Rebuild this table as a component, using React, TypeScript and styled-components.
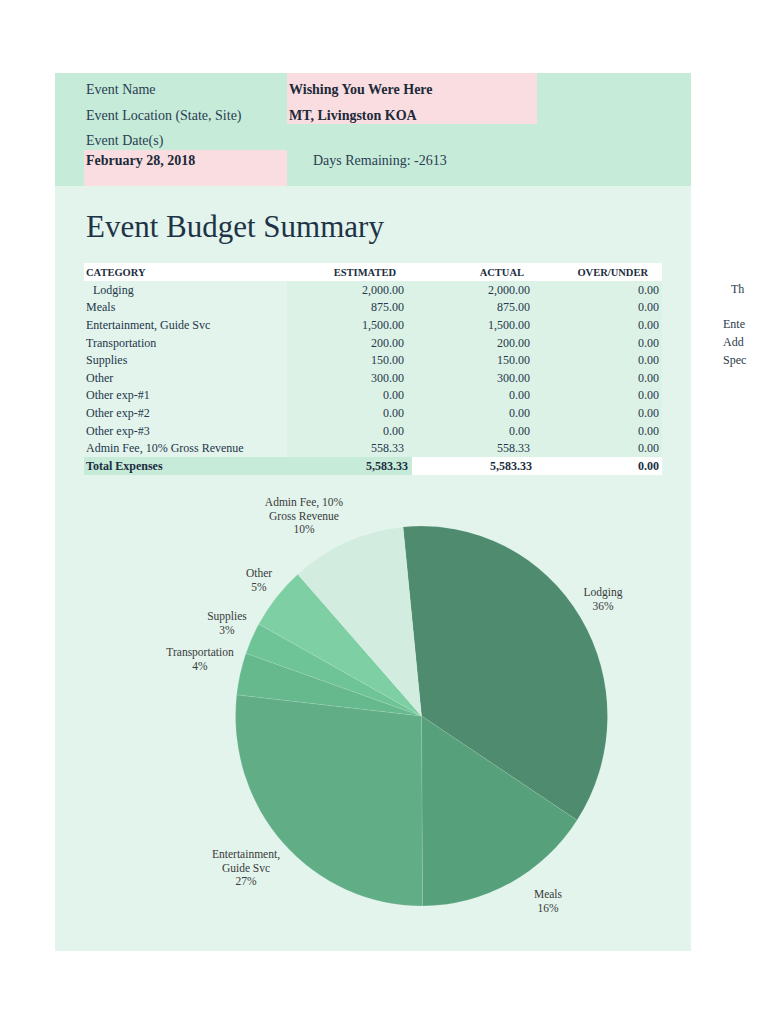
import React from "react";
import styled, { createGlobalStyle } from "styled-components";

const GlobalStyle = createGlobalStyle`
  html, body {
    margin: 0;
    padding: 0;
    background: #ffffff;
    overflow-x: hidden;
  }
  body {
    font-family: "Liberation Serif", "DejaVu Serif", serif;
    color: #22344a;
  }
`;

const Page = styled.div`
  padding: 73px 0 73px 55px;
`;

const Panel = styled.div`
  width: 636px;
  background: #e2f4ec;
`;

const InfoGrid = styled.div`
  display: grid;
  grid-template-columns: 29px 203px 250px 154px;
  grid-template-rows: 28px 23px 26px 36px;
  background: #c6ebd9;
`;

const InfoCell = styled.div<{ $col: number; $row: string; $bold?: boolean; $pink?: boolean; $top?: boolean; $pb?: number; $pl?: number }>`
  grid-column: ${(p) => p.$col};
  grid-row: ${(p) => p.$row};
  display: flex;
  flex-direction: column;
  justify-content: ${(p) => (p.$top ? "flex-start" : "flex-end")};
  padding: ${(p) => (p.$top ? "3px" : "0")} 0 ${(p) => p.$pb ?? 0}px ${(p) => p.$pl ?? 2}px;
  background: ${(p) => (p.$pink ? "#f9dde0" : "transparent")};
  font-size: 14px;
  line-height: 16px;
  font-weight: ${(p) => (p.$bold ? 700 : 400)};
  color: ${(p) => (p.$bold ? "#1c2a3a" : "#2a3d52")};
  white-space: nowrap;
`;

const PinkStack = styled.div`
  grid-column: 3;
  grid-row: 1 / 3;
  background: #f9dde0;
  display: grid;
  grid-template-rows: 28px 23px;
`;

const StackLine = styled.div<{ $pb: number }>`
  display: flex;
  align-items: flex-end;
  padding: 0 0 ${(p) => p.$pb}px 2px;
  font-size: 14px;
  line-height: 16px;
  font-weight: 700;
  color: #1c2a3a;
  white-space: nowrap;
`;

const Summary = styled.section`
  padding: 23px 0 0 29px;
`;

const Title = styled.h1`
  margin: 0 0 18px 2px;
  font-size: 31px;
  line-height: 36px;
  font-weight: 400;
  color: #1f3346;
`;

const Table = styled.div`
  display: flex;
  flex-direction: column;
`;

const Row = styled.div<{ $h: number }>`
  display: grid;
  grid-template-columns: 203px 125px 126px 124px 100px;
  height: ${(p) => p.$h}px;
`;

const Cell = styled.div<{ $right?: boolean; $bg?: string; $bold?: boolean; $pr?: number; $pl?: number; $size?: number }>`
  display: flex;
  align-items: center;
  justify-content: ${(p) => (p.$right ? "flex-end" : "flex-start")};
  padding: 1px ${(p) => p.$pr ?? 0}px 0 ${(p) => p.$pl ?? 2}px;
  background: ${(p) => p.$bg ?? "transparent"};
  font-size: ${(p) => p.$size ?? 12}px;
  font-weight: ${(p) => (p.$bold ? 700 : 400)};
  color: ${(p) => (p.$bold ? "#1c2d40" : "#24364a")};
  white-space: nowrap;
  overflow: hidden;
`;

const Note = styled.div<{ $indent?: number }>`
  display: flex;
  align-items: center;
  padding-left: ${(p) => 61 + (p.$indent ?? 0)}px;
  font-size: 12px;
  color: #2a3a4a;
  white-space: nowrap;
`;

const ChartArea = styled.div`
  height: 476px;
`;

const ChartSvg = styled.svg`
  display: block;
  overflow: visible;
`;

const LabelText = styled.text`
  font-family: "Liberation Serif", "DejaVu Serif", serif;
  font-size: 11.5px;
  fill: #3a3a3a;
`;

type Item = { name: string; est: string; act: string; indent?: boolean; note?: string; noteIndent?: number };

const items: Item[] = [
  { name: "Lodging", est: "2,000.00", act: "2,000.00", indent: true, note: "Th", noteIndent: 8 },
  { name: "Meals", est: "875.00", act: "875.00" },
  { name: "Entertainment, Guide Svc", est: "1,500.00", act: "1,500.00", note: "Ente" },
  { name: "Transportation", est: "200.00", act: "200.00", note: "Add" },
  { name: "Supplies", est: "150.00", act: "150.00", note: "Spec" },
  { name: "Other", est: "300.00", act: "300.00" },
  { name: "Other exp-#1", est: "0.00", act: "0.00" },
  { name: "Other exp-#2", est: "0.00", act: "0.00" },
  { name: "Other exp-#3", est: "0.00", act: "0.00" },
  { name: "Admin Fee, 10% Gross Revenue", est: "558.33", act: "558.33" },
];

const NUM_BG = "#ddf2e7";

type Slice = { value: number; color: string; label: string[]; lx: number; ly: number };

const slices: Slice[] = [
  { value: 2000, color: "#4f8c6f", label: ["Lodging", "36%"], lx: 548, ly: 117 },
  { value: 875, color: "#56a07b", label: ["Meals", "16%"], lx: 493, ly: 419 },
  { value: 1500, color: "#61ae86", label: ["Entertainment,", "Guide Svc", "27%"], lx: 191, ly: 379 },
  { value: 200, color: "#65b98d", label: ["Transportation", "4%"], lx: 145, ly: 177 },
  { value: 150, color: "#6ec497", label: ["Supplies", "3%"], lx: 172, ly: 141 },
  { value: 300, color: "#7ecfa3", label: ["Other", "5%"], lx: 204, ly: 98 },
  { value: 558.33, color: "#d2ede0", label: ["Admin Fee, 10%", "Gross Revenue", "10%"], lx: 249, ly: 27 },
];

const CX = 366.5;
const CY = 241;
const RX = 186;
const RY = 190;
const START = -5.7;

function pt(deg: number): [number, number] {
  const a = (deg * Math.PI) / 180;
  return [CX + RX * Math.sin(a), CY - RY * Math.cos(a)];
}

function PieChart() {
  const total = slices.reduce((s, x) => s + x.value, 0);
  let acc = START;
  const paths = slices.map((s, i) => {
    const sweep = (s.value / total) * 360;
    const a0 = acc;
    const a1 = acc + sweep;
    acc = a1;
    const [x0, y0] = pt(a0);
    const [x1, y1] = pt(a1);
    const large = sweep > 180 ? 1 : 0;
    const d = `M ${CX} ${CY} L ${x0.toFixed(2)} ${y0.toFixed(2)} A ${RX} ${RY} 0 ${large} 1 ${x1.toFixed(2)} ${y1.toFixed(2)} Z`;
    return <path key={i} d={d} fill={s.color} stroke="rgba(255,255,255,0.18)" strokeWidth={0.6} />;
  });
  return (
    <ChartSvg width={636} height={476} viewBox="0 0 636 476">
      {paths}
      {slices.map((s, i) => (
        <LabelText key={i} textAnchor="middle">
          {s.label.map((line, j) => (
            <tspan key={j} x={s.lx} y={s.ly + 4 + j * 13.5}>
              {line}
            </tspan>
          ))}
        </LabelText>
      ))}
    </ChartSvg>
  );
}

export default function App() {
  return (
    <>
      <GlobalStyle />
      <Page>
        <Panel>
          <InfoGrid>
            <InfoCell $col={2} $row="1" $pb={3}>Event Name</InfoCell>
            <InfoCell $col={2} $row="2" $pb={0}>Event Location (State, Site)</InfoCell>
            <PinkStack>
              <StackLine $pb={3}>Wishing You Were Here</StackLine>
              <StackLine $pb={0}>MT, Livingston KOA</StackLine>
            </PinkStack>
            <InfoCell $col={2} $row="3" $pb={1}>Event Date(s)</InfoCell>
            <InfoCell $col={2} $row="4" $top $pink $bold>February 28, 2018</InfoCell>
            <InfoCell $col={3} $row="4" $top $pl={26}>Days Remaining: -2613</InfoCell>
          </InfoGrid>
          <Summary>
            <Title>Event Budget Summary</Title>
            <Table>
              <Row $h={18}>
                <Cell $bg="#ffffff" $bold $size={10.5}>CATEGORY</Cell>
                <Cell $bg="#ffffff" $bold $right $pr={16} $size={10.5}>ESTIMATED</Cell>
                <Cell $bg="#ffffff" $bold $right $pr={14} $size={10.5}>ACTUAL</Cell>
                <Cell $bg="#ffffff" $bold $right $pr={14} $size={10.5}>OVER/UNDER</Cell>
                <Note />
              </Row>
              {items.map((it) => (
                <Row $h={17.6} key={it.name}>
                  <Cell $pl={it.indent ? 9 : 2}>{it.name}</Cell>
                  <Cell $bg={NUM_BG} $right $pr={8}>{it.est}</Cell>
                  <Cell $bg={NUM_BG} $right $pr={8}>{it.act}</Cell>
                  <Cell $bg={NUM_BG} $right $pr={3}>0.00</Cell>
                  <Note $indent={it.noteIndent}>{it.note ?? ""}</Note>
                </Row>
              ))}
              <Row $h={18}>
                <Cell $bg="#c6ebd9" $bold>Total Expenses</Cell>
                <Cell $bg="#c6ebd9" $bold $right $pr={4}>5,583.33</Cell>
                <Cell $bg="#ffffff" $bold $right $pr={6}>5,583.33</Cell>
                <Cell $bg="#ffffff" $bold $right $pr={3}>0.00</Cell>
                <Note />
              </Row>
            </Table>
          </Summary>
          <ChartArea>
            <PieChart />
          </ChartArea>
        </Panel>
      </Page>
    </>
  );
}
